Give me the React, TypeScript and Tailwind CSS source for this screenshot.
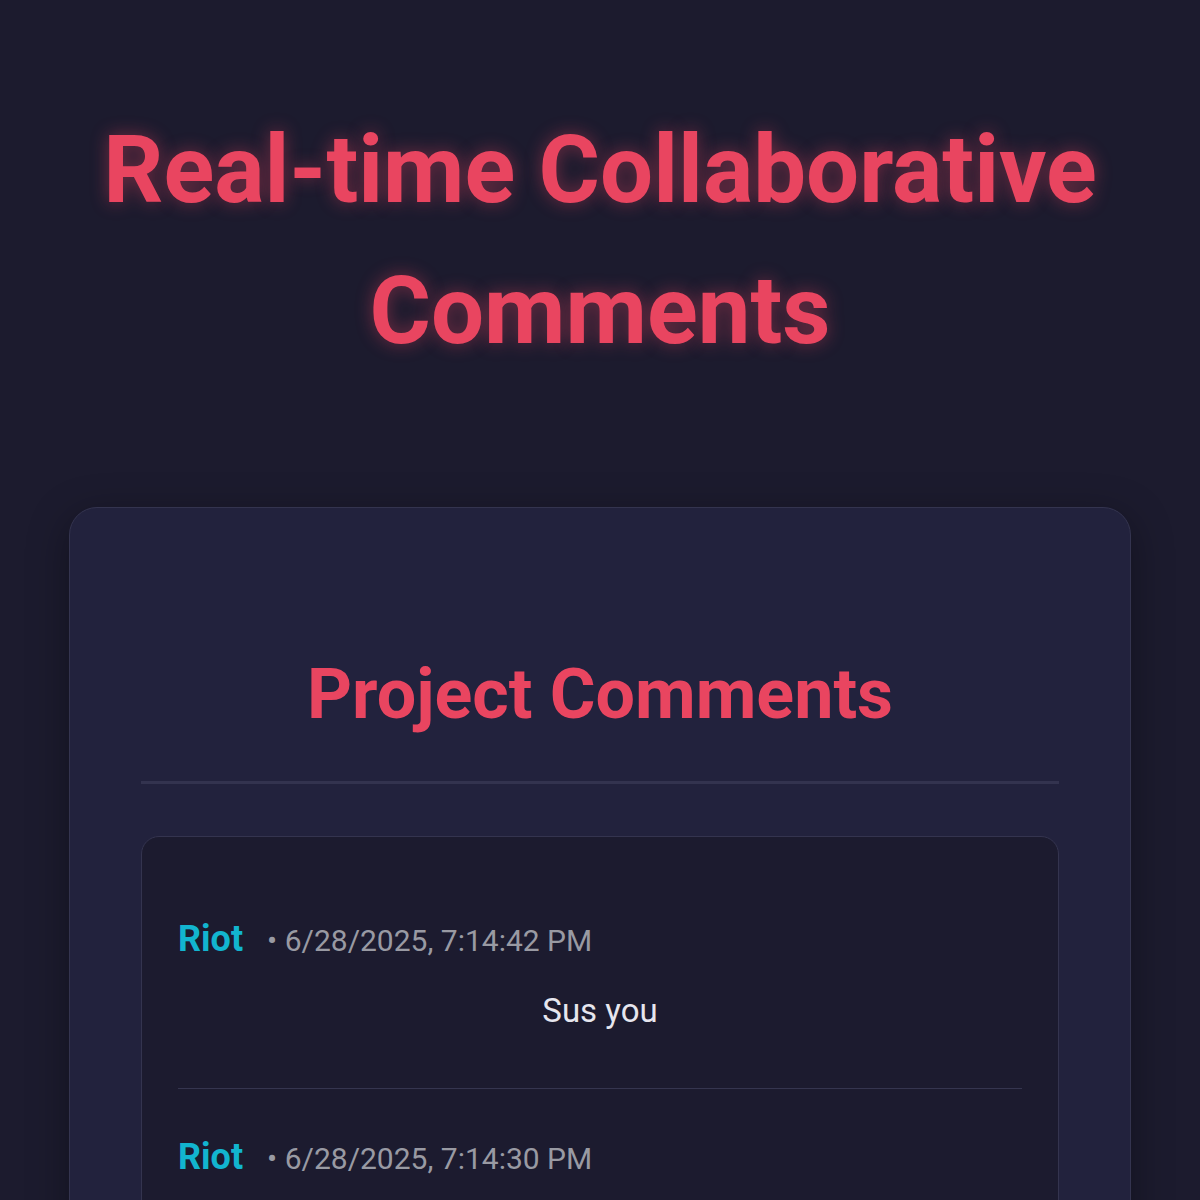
import React from 'react';

interface Comment {
  id: number;
  user: string;
  time: string;
  text: string;
}

const comments: Comment[] = [
  { id: 1, user: 'Riot', time: '6/28/2025, 7:14:42 PM', text: 'Sus you' },
  { id: 2, user: 'Riot', time: '6/28/2025, 7:14:30 PM', text: 'Hello there' },
  { id: 3, user: 'Riot', time: '6/28/2025, 7:14:12 PM', text: 'First!' },
];

const App: React.FC = () => {
  return (
    <div className="min-h-screen bg-[#1c1b2e] font-['Roboto',sans-serif] pt-[100px] pb-20">
      {/* Page title */}
      <h1 className="text-center text-[94px] leading-[141px] font-bold text-[#e94560] [text-shadow:0_0_18px_rgba(233,69,96,0.45)] px-10">
        Real-time Collaborative Comments
      </h1>

      {/* Comments card */}
      <div className="mx-[69px] mt-[125px] bg-[#22223d] border border-[#34344f] rounded-[28px] shadow-[0_10px_40px_rgba(0,0,0,0.35)] px-[71px] pt-[71px] pb-[71px]">
        <h2 className="mt-[73px] text-center text-[70px] leading-[84px] font-bold text-[#e94560] pb-[45px] border-b-[3px] border-[#33334f]">
          Project Comments
        </h2>

        <div className="mt-[52px] bg-[#1c1b2f] border border-[#34344f] rounded-[18px] px-[36px] py-[34px]">
          {comments.map((c) => (
            <div key={c.id} className="pt-[41px] pb-[53px] border-b border-[#35354f] last:border-b-0">
              <div className="flex items-baseline h-[54px]">
                <span className="text-[36px] leading-[54px] font-bold text-[#12b5cf]">{c.user}</span>
                <span className="ml-[24px] text-[30px] text-[#999aa3]">• {c.time}</span>
              </div>
              <p className="mt-[21px] text-center text-[33px] leading-[48px] text-[#e6e6ee]">{c.text}</p>
            </div>
          ))}
        </div>
      </div>
    </div>
  );
};

export default App;
